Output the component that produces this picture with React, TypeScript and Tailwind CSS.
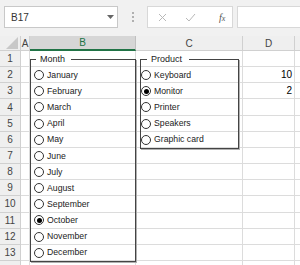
import React from "react";

const ROW_H = "h-[16.17px]";

const months = [
  "January","February","March","April","May","June","July","August","September","October","November","December",
];
const products = ["Keyboard", "Monitor", "Printer", "Speakers", "Graphic card"];

function Radio({ label, checked }: { label: string; checked?: boolean }) {
  return (
    <div className={`${ROW_H} flex items-center`}>
      <div className="w-[10px] h-[10px] rounded-full border border-[#333] bg-white flex items-center justify-center shrink-0">
        {checked && <div className="w-[5px] h-[5px] rounded-full bg-black" />}
      </div>
      <span className="ml-[3px] text-[8.7px] text-[#222] leading-none whitespace-nowrap">{label}</span>
    </div>
  );
}

export default function App() {
  const rows = Array.from({ length: 14 }, (_, i) => i + 1);
  const font = { fontFamily: '"Liberation Sans", Arial, sans-serif' };
  return (
    <div className="w-[300px] h-[265px] overflow-hidden bg-white relative" style={font}>
      {/* Toolbar */}
      <div className="h-[36px] bg-[#f1f1f1] flex items-start pt-[6px] pl-[4px]">
        <div className="w-[114px] h-[22px] bg-white border border-[#c8c8c8] flex items-center justify-between pl-[6px] pr-[3px]">
          <span className="text-[10px] text-[#333]">B17</span>
          <svg width="7" height="4" viewBox="0 0 7 4"><path d="M0 0h7L3.5 4z" fill="#666" /></svg>
        </div>
        <div className="w-[29px] h-[22px] flex flex-col items-center justify-center gap-[2px]">
          <div className="w-[2px] h-[2px] bg-[#b0b0b0]" />
          <div className="w-[2px] h-[2px] bg-[#b0b0b0]" />
          <div className="w-[2px] h-[2px] bg-[#b0b0b0]" />
        </div>
        <div className="w-[86px] h-[22px] bg-white border border-[#d8d8d8] flex items-center">
          <svg className="ml-[10px]" width="9" height="9" viewBox="0 0 9 9"><path d="M1 1l7 7M8 1L1 8" stroke="#b8b8b8" strokeWidth="1" /></svg>
          <svg className="ml-[18px]" width="11" height="9" viewBox="0 0 11 9"><path d="M1 5l3 3 6-7" stroke="#b8b8b8" strokeWidth="1" fill="none" /></svg>
          <span className="ml-[23px] text-[10px] italic text-[#555]" style={{ fontFamily: '"Liberation Serif", serif' }}>f<span className="text-[8px]">x</span></span>
        </div>
        <div className="ml-[4px] flex-1 h-[22px] bg-white border border-[#d8d8d8] border-r-0" />
      </div>

      {/* Column headers */}
      <div className="h-[15px] flex bg-[#efefef] text-[10px] text-[#444]">
        <div className="w-[21px] border-r border-b border-[#d0d0d0] relative">
          <svg className="absolute right-[2px] bottom-[1px]" width="12" height="12" viewBox="0 0 12 12"><path d="M12 0V12H0z" fill="#c8c8c8" /></svg>
        </div>
        <div className="w-[9px] border-r border-b border-[#d0d0d0] flex items-center justify-center">A</div>
        <div className="w-[106px] bg-[#d6d6d6] border-r border-[#c0c0c0] border-b-2 border-b-[#217346] flex items-center justify-center text-[#217346]">B</div>
        <div className="w-[107px] border-r border-b border-[#d0d0d0] flex items-center justify-center">C</div>
        <div className="w-[52px] border-r border-b border-[#d0d0d0] flex items-center justify-center">D</div>
        <div className="flex-1 border-b border-[#d0d0d0]" />
      </div>

      {/* Grid */}
      <div className="flex flex-col">
        {rows.map((r) => (
          <div key={r} className={`${ROW_H} flex`}>
            <div className="w-[21px] bg-[#efefef] border-r border-b border-[#d0d0d0] text-[10px] text-[#444] flex items-center justify-center">{r < 14 ? r : ""}</div>
            <div className="w-[9px] border-r border-b border-[#dcdcdc]" />
            <div className="w-[106px] border-r border-b border-[#dcdcdc]" />
            <div className="w-[107px] border-r border-b border-[#dcdcdc]" />
            <div className="w-[52px] border-r border-b border-[#dcdcdc] text-[10px] text-black flex items-center justify-end pr-[2px]">
              {r === 2 ? "10" : r === 3 ? "2" : ""}
            </div>
            <div className="flex-1 border-b border-[#dcdcdc]" />
          </div>
        ))}
      </div>

      {/* Month group box */}
      <div className="absolute left-[30px] top-[59px] w-[106px] h-[203px] border border-[#444] shadow-[1px_1px_0_#b0b0b0]">
        <div className="absolute left-[5px] top-[-6px] bg-white pl-[4px] pr-[6px] text-[9px] text-[#222] leading-[11px]">Month</div>
        <div className="mt-[7px] ml-[3px] flex flex-col">
          {months.map((m) => (
            <Radio key={m} label={m} checked={m === "October"} />
          ))}
        </div>
      </div>

      {/* Product group box */}
      <div className="absolute left-[140px] top-[59px] w-[99px] h-[90px] border border-[#444] shadow-[1px_1px_0_#b0b0b0]">
        <div className="absolute left-[6px] top-[-6px] bg-white pl-[4px] pr-[7px] text-[9px] text-[#222] leading-[11px]">Product</div>
        <div className="mt-[7px] flex flex-col">
          {products.map((p) => (
            <Radio key={p} label={p} checked={p === "Monitor"} />
          ))}
        </div>
      </div>
    </div>
  );
}
